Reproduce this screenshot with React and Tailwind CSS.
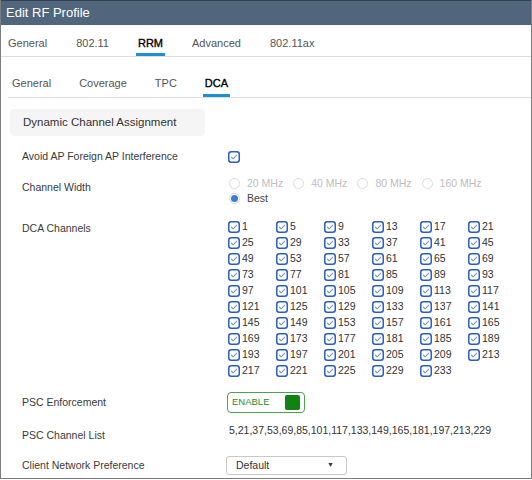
const channels = [
    1, 5, 9, 13, 17, 21, 25, 29, 33, 37, 41, 45, 49, 53, 57, 61, 65, 69, 73, 77, 81, 85, 89, 93,
    97, 101, 105, 109, 113, 117, 121, 125, 129, 133, 137, 141, 145, 149, 153, 157, 161, 165,
    169, 173, 177, 181, 185, 189, 193, 197, 201, 205, 209, 213, 217, 221, 225, 229, 233,
];

const topTabs = ['General', '802.11', 'RRM', 'Advanced', '802.11ax'];
const subTabs = ['General', 'Coverage', 'TPC', 'DCA'];

function Check() {
    return (
        <svg width="12" height="12" viewBox="0 0 12 12" className="shrink-0">
            <rect x="0.75" y="0.75" width="10.5" height="10.5" rx="2.5" fill="white" stroke="#2c5cc5" strokeWidth="1.5" />
            <path d="M3.4 6.1 L5.1 7.8 L8.6 4.2" fill="none" stroke="#6d9ee0" strokeWidth="1.1" strokeLinecap="round" strokeLinejoin="round" />
        </svg>
    );
}

function Radio({ label, checked }) {
    return (
        <div className="flex items-center h-[15px]">
            {checked ? (
                <span className="w-[11px] h-[11px] rounded-full border border-[#d4d4d4] flex items-center justify-center">
                    <span className="w-[7px] h-[7px] rounded-full bg-[#3b7dcc]" />
                </span>
            ) : (
                <span className="w-[11px] h-[11px] rounded-full border border-[#dcdcdc]" />
            )}
            <span className={`ml-[7px] ${checked ? 'text-[#444]' : 'text-[#bdbdbd]'}`}>{label}</span>
        </div>
    );
}

function Tabs({ items, active, pad, className }) {
    return (
        <div className={`flex items-end ${className}`}>
            {items.map((t) => (
                <div
                    key={t}
                    className={`px-[2px] ${pad} leading-[14px] border-b-[3px] ${
                        t === active
                            ? 'border-[#1d8fd3] text-black [-webkit-text-stroke:0.35px_#000]'
                            : 'border-transparent text-[#555]'
                    }`}
                >
                    {t}
                </div>
            ))}
        </div>
    );
}

export default function App() {
    return (
        <div className="w-[532px] h-[479px] border border-t-0 border-[#7d7d7d] bg-white overflow-hidden font-['Liberation_Sans',Arial,sans-serif] text-[10.5px] text-[#3a3a3a]">
            <div className="h-[25px] bg-[#51667c] border-t border-[#34424f] flex items-center pl-[5px] text-white text-[13px]">
                Edit RF Profile
            </div>

            <div className="h-[32px] border-b border-[#dedede] flex items-end">
                <Tabs items={topTabs} active="RRM" pad="pb-[3px]" className="ml-[5px] gap-[25px] text-[11px]" />
            </div>

            <div className="ml-[7px] h-[41px] border-b border-[#dedede] flex items-end">
                <Tabs items={subTabs} active="DCA" pad="pb-[4px]" className="ml-[2px] gap-[24px] text-[11px]" />
            </div>

            <div className="pl-[21px]">
                <div className="ml-[-12px] mt-[11px] w-[195px] h-[27px] rounded-[4px] bg-[#f5f5f5] flex items-center pl-[13px] text-[11.5px] text-[#333]">
                    Dynamic Channel Assignment
                </div>

                <div className="flex mt-[14px] h-[14px] items-center">
                    <div className="w-[206px]">Avoid AP Foreign AP Interference</div>
                    <Check />
                </div>

                <div className="flex mt-[12px]">
                    <div className="w-[207px] pt-[4px] leading-[14px]">Channel Width</div>
                    <div>
                        <div className="flex gap-[10px]">
                            <Radio label="20 MHz" />
                            <Radio label="40 MHz" />
                            <Radio label="80 MHz" />
                            <Radio label="160 MHz" />
                        </div>
                        <Radio label="Best" checked />
                    </div>
                </div>

                <div className="flex mt-[13px]">
                    <div className="w-[206px] pt-[2px] leading-[14px]">DCA Channels</div>
                    <div className="grid grid-cols-[repeat(6,48px)] text-[#333]">
                        {channels.map((c) => (
                            <div key={c} className="flex items-center h-[16px] gap-[2px]">
                                <Check />
                                <span>{c}</span>
                            </div>
                        ))}
                    </div>
                </div>

                <div className="flex mt-[13px] items-center">
                    <div className="w-[205px]">PSC Enforcement</div>
                    <div className="w-[78px] h-[21px] rounded-[4px] border-[1.5px] border-[#4aa34a] flex items-center justify-between pl-[4px] pr-[4px]">
                        <span className="text-[9.5px] text-[#2e8b2e]">ENABLE</span>
                        <span className="w-[15px] h-[15px] rounded-[2px] bg-[#128212]" />
                    </div>
                </div>

                <div className="flex mt-[10px]">
                    <div className="w-[207px] pt-[5px] leading-[14px]">PSC Channel List</div>
                    <div className="leading-[14px] text-[#333]">5,21,37,53,69,85,101,117,133,149,165,181,197,213,229</div>
                </div>

                <div className="flex mt-[14px] items-center">
                    <div className="w-[204px]">Client Network Preference</div>
                    <div className="w-[121px] h-[19px] rounded-[3px] border border-[#c8c8c8] flex items-center justify-between pl-[9px] pr-[12px] text-[#333]">
                        <span>Default</span>
                        <span className="text-[7px]">▼</span>
                    </div>
                </div>
            </div>
        </div>
    );
}
